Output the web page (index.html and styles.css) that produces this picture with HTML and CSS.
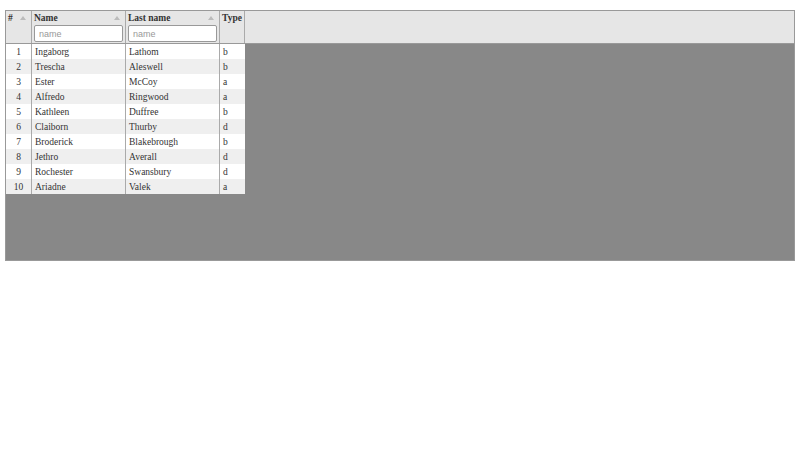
FILE: index.html
```html
<!DOCTYPE html>
<html>
<head>
<meta charset="utf-8">
<link rel="stylesheet" href="styles.css">
</head>
<body>
<div class="table">
  <div class="header">
    <div class="hcol c-num">
      <div class="htitle"><span>#</span><span class="arrow"></span></div>
    </div>
    <div class="hcol c-name">
      <div class="htitle"><span>Name</span><span class="arrow"></span></div>
      <input class="filter" type="text" placeholder="name">
    </div>
    <div class="hcol c-last">
      <div class="htitle"><span>Last name</span><span class="arrow"></span></div>
      <input class="filter" type="text" placeholder="name">
    </div>
    <div class="hcol c-type">
      <div class="htitle"><span>Type</span></div>
    </div>
  </div>
  <div class="rows">
    <div class="row"><div class="cell c-num">1</div><div class="cell c-name">Ingaborg</div><div class="cell c-last">Lathom</div><div class="cell c-type">b</div></div>
    <div class="row"><div class="cell c-num">2</div><div class="cell c-name">Trescha</div><div class="cell c-last">Aleswell</div><div class="cell c-type">b</div></div>
    <div class="row"><div class="cell c-num">3</div><div class="cell c-name">Ester</div><div class="cell c-last">McCoy</div><div class="cell c-type">a</div></div>
    <div class="row"><div class="cell c-num">4</div><div class="cell c-name">Alfredo</div><div class="cell c-last">Ringwood</div><div class="cell c-type">a</div></div>
    <div class="row"><div class="cell c-num">5</div><div class="cell c-name">Kathleen</div><div class="cell c-last">Duffree</div><div class="cell c-type">b</div></div>
    <div class="row"><div class="cell c-num">6</div><div class="cell c-name">Claiborn</div><div class="cell c-last">Thurby</div><div class="cell c-type">d</div></div>
    <div class="row"><div class="cell c-num">7</div><div class="cell c-name">Broderick</div><div class="cell c-last">Blakebrough</div><div class="cell c-type">b</div></div>
    <div class="row"><div class="cell c-num">8</div><div class="cell c-name">Jethro</div><div class="cell c-last">Averall</div><div class="cell c-type">d</div></div>
    <div class="row"><div class="cell c-num">9</div><div class="cell c-name">Rochester</div><div class="cell c-last">Swansbury</div><div class="cell c-type">d</div></div>
    <div class="row"><div class="cell c-num">10</div><div class="cell c-name">Ariadne</div><div class="cell c-last">Valek</div><div class="cell c-type">a</div></div>
  </div>
</div>
</body>
</html>
```
FILE: styles.css
```css
html, body {
  margin: 0;
  padding: 0;
  background: #fff;
}
body {
  padding: 10px 5px;
  font-family: "Liberation Serif", "Times New Roman", serif;
  font-size: 9.5px;
  color: #333;
}
.table {
  box-sizing: border-box;
  width: 790px;
  height: 251px;
  border: 1px solid #999;
  background: #888;
  display: flex;
  flex-direction: column;
}
.header {
  display: flex;
  height: 33px;
  background: #e6e6e6;
  border-bottom: 1px solid #999;
  box-sizing: border-box;
  flex: none;
}
.hcol {
  box-sizing: border-box;
  border-right: 1px solid #aaa;
  padding: 1px 2px 0 2px;
  display: flex;
  flex-direction: column;
}
.htitle {
  display: flex;
  justify-content: space-between;
  align-items: center;
  font-weight: bold;
  height: 12px;
  line-height: 12px;
  padding-right: 3px;
}
.c-num { width: 26px; }
.c-name { width: 94px; }
.c-last { width: 94px; }
.c-type { width: 25px; }
.arrow {
  width: 0;
  height: 0;
  border-left: 3px solid transparent;
  border-right: 3px solid transparent;
  border-bottom: 4px solid #bbb;
}
.filter {
  box-sizing: border-box;
  margin-top: 1px;
  width: 89px;
  height: 17px;
  border: 1px solid #999;
  border-radius: 2px;
  padding: 0 4px;
  font-family: "Liberation Sans", Arial, sans-serif;
  font-size: 9px;
  color: #333;
  background: #fff;
}
.filter::placeholder {
  color: #999;
}
.rows {
  display: flex;
  flex-direction: column;
  align-items: flex-start;
}
.row {
  display: flex;
  height: 15px;
  background: #fff;
}
.row:nth-child(even) {
  background: #efefef;
}
.cell {
  box-sizing: border-box;
  border-right: 1px solid #aaa;
  padding: 0 2px;
  height: 15px;
  line-height: 17px;
  white-space: nowrap;
  overflow: hidden;
}
.row .c-num {
  text-align: center;
}
.row .c-name, .row .c-last, .row .c-type {
  padding-left: 3px;
}
.row .c-type {
  border-right: none;
}
```
